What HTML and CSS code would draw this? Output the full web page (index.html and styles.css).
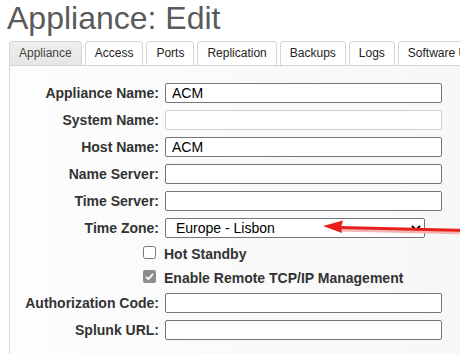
FILE: index.html
```html
<!DOCTYPE html>
<html lang="en">
<head>
  <meta charset="UTF-8">
  <meta name="viewport" content="width=device-width, initial-scale=1.0">
  <title>Appliance: Edit</title>
  <link rel="stylesheet" href="styles.css">
</head>
<body>
  <div class="page">
    <h1 class="title">Appliance: Edit</h1>

    <ul class="tabs">
      <li class="tab active">Appliance</li>
      <li class="tab">Access</li>
      <li class="tab">Ports</li>
      <li class="tab">Replication</li>
      <li class="tab">Backups</li>
      <li class="tab">Logs</li>
      <li class="tab">Software Update</li>
    </ul>

    <div class="panel">
      <form class="form">
        <label class="label" for="appName">Appliance Name:</label>
        <input class="field" id="appName" type="text" value="ACM">

        <label class="label" for="sysName">System Name:</label>
        <input class="field" id="sysName" type="text" disabled>

        <label class="label" for="hostName">Host Name:</label>
        <input class="field" id="hostName" type="text" value="ACM">

        <label class="label" for="nameServer">Name Server:</label>
        <input class="field" id="nameServer" type="text">

        <label class="label" for="timeServer">Time Server:</label>
        <input class="field" id="timeServer" type="text">

        <label class="label" for="timeZone">Time Zone:</label>
        <select class="select" id="timeZone">
          <option>Europe - Lisbon</option>
          <option>Europe - London</option>
          <option>Europe - Madrid</option>
        </select>

        <input class="check" id="hotStandby" type="checkbox">
        <label class="check-label" for="hotStandby">Hot Standby</label>

        <input class="check locked" id="remoteMgmt" type="checkbox" checked disabled>
        <label class="check-label" for="remoteMgmt">Enable Remote TCP/IP Management</label>

        <label class="label" for="authCode">Authorization Code:</label>
        <input class="field" id="authCode" type="text">

        <label class="label" for="splunkUrl">Splunk URL:</label>
        <input class="field" id="splunkUrl" type="text">
      </form>
    </div>
  </div>

  <!-- annotation arrow pointing at the time zone -->
  <svg class="arrow" width="150" height="24" viewBox="0 0 150 24">
    <line x1="22" y1="14" x2="150" y2="17" stroke="#f3b5b3" stroke-width="3" />
    <line x1="22" y1="11.5" x2="150" y2="14.5" stroke="#e8201c" stroke-width="3" />
    <polygon points="5,10 25,4.5 23,11.5 24,17" fill="#e8201c" />
  </svg>
</body>
</html>
```

FILE: styles.css
```css
html, body {
  margin: 0;
  padding: 0;
  height: 100%;
  overflow: hidden;
  background-color: #fff;
  font-family: "Liberation Sans", Arial, sans-serif;
}

.page {
  padding-left: 9px;
}

.title {
  margin: 0 0 5px -2px;
  font-size: 32px;
  line-height: 36px;
  font-weight: normal;
  color: #5a5a5a;
  white-space: nowrap;
}

.tabs {
  display: flex;
  gap: 3px;
  margin: 0;
  padding: 0;
  list-style: none;
  white-space: nowrap;
}

.tab {
  flex: none;
  height: 24px;
  box-sizing: border-box;
  padding: 0 9px;
  border: 1px solid #d6d6d6;
  border-bottom: none;
  border-radius: 4px 4px 0 0;
  background-color: #fff;
  font-size: 12px;
  line-height: 23px;
  color: #222;
}

.tab.active {
  background: linear-gradient(#eeeeee, #e6e6e6);
  color: #444;
}

.panel {
  border-top: 1px solid #d6d6d6;
  border-left: 1px solid #d6d6d6;
  background: linear-gradient(to right, #fdfdfd, #f7f7f7);
  height: 400px;
  padding-top: 17px;
}

.form {
  display: grid;
  grid-template-columns: 149px 277px;
  column-gap: 6px;
  row-gap: 7px;
  align-items: center;
}

.label {
  justify-self: end;
  font-size: 14px;
  font-weight: bold;
  color: #333;
  white-space: nowrap;
}

.field {
  height: 20px;
  box-sizing: border-box;
  margin: 0;
  padding: 1px 6px;
  border: 1px solid #767676;
  border-radius: 2px;
  background-color: #fff;
  font-family: "Liberation Sans", Arial, sans-serif;
  font-size: 14px;
  color: #000;
}

.field:disabled {
  border-color: #cfcfcf;
  background-color: #fff;
}

.select {
  width: 260px;
  height: 20px;
  box-sizing: border-box;
  margin: 0;
  padding: 0 6px;
  border: 1px solid #767676;
  border-radius: 2px;
  background-color: #fff;
  font-family: "Liberation Sans", Arial, sans-serif;
  font-size: 14px;
  color: #000;
}

.check {
  justify-self: end;
  width: 13px;
  height: 13px;
  margin: 1px 3px 3px 4px;
}

.check.locked {
  appearance: none;
  box-sizing: border-box;
  border: none;
  border-radius: 2px;
  background-color: #8d8d8d;
  background-image: url("data:image/svg+xml,%3Csvg xmlns='http://www.w3.org/2000/svg' viewBox='0 0 13 13'%3E%3Cpath d='M3 6.8 5.4 9.2 10 3.8' fill='none' stroke='white' stroke-width='1.8'/%3E%3C/svg%3E");
  background-size: 13px 13px;
}

.check-label {
  margin-left: -1px;
  font-size: 14px;
  font-weight: bold;
  color: #333;
  white-space: nowrap;
}

.arrow {
  position: absolute;
  left: 318px;
  top: 216px;
}
```
